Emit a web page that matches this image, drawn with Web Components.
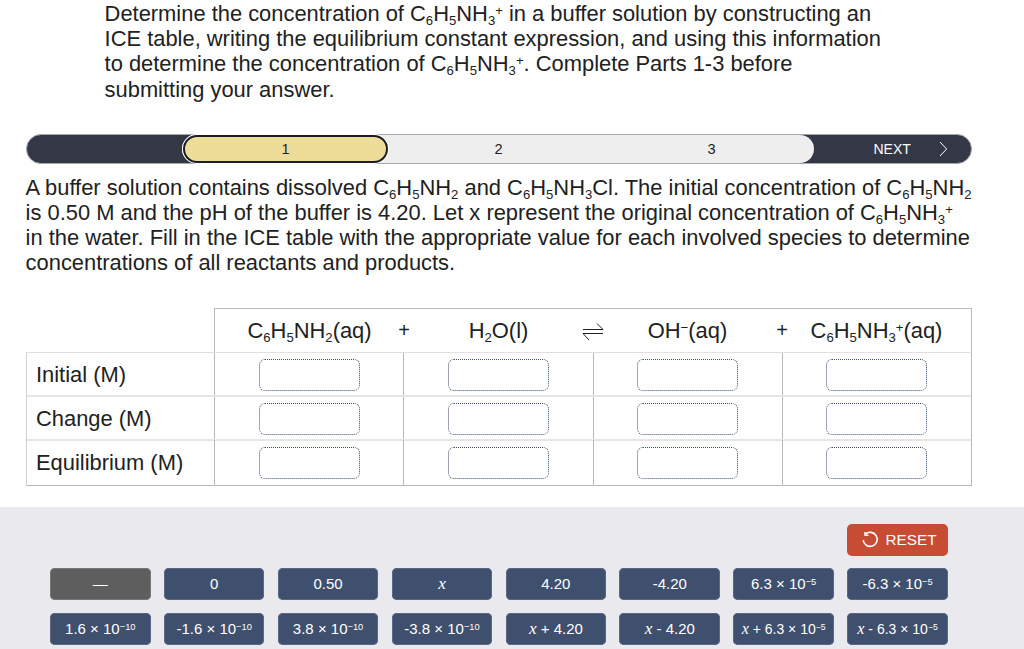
<!DOCTYPE html>
<html>
<head>
<meta charset="utf-8">
<style>
  html, body { margin: 0; padding: 0; }
  body { width: 1024px; height: 649px; overflow: hidden; background: #fff; color: #212121; font-family: "Liberation Sans", Arial, sans-serif; }
</style>
</head>
<body>
<quiz-page>
  <quiz-text slot="intro" style="padding: 1px 130px 0 104.6px; line-height: 25.2px;">Determine the concentration of C<sub>6</sub>H<sub>5</sub>NH<sub>3</sub><sup>+</sup> in a buffer solution by constructing an ICE table, writing the equilibrium constant expression, and using this information to determine the concentration of C<sub>6</sub>H<sub>5</sub>NH<sub>3</sub><sup>+</sup>. Complete Parts 1-3 before submitting your answer.</quiz-text>
  <step-bar slot="steps" current="1"></step-bar>
  <quiz-text slot="body" style="padding: 0 50px 0 25.6px;">A buffer solution contains dissolved C<sub>6</sub>H<sub>5</sub>NH<sub>2</sub> and C<sub>6</sub>H<sub>5</sub>NH<sub>3</sub>Cl. The initial concentration of C<sub>6</sub>H<sub>5</sub>NH<sub>2</sub> is 0.50 M and the pH of the buffer is 4.20. Let x represent the original concentration of C<sub>6</sub>H<sub>5</sub>NH<sub>3</sub><sup>+</sup> in the water. Fill in the ICE table with the appropriate value for each involved species to determine concentrations of all reactants and products.</quiz-text>
  <ice-table slot="table"></ice-table>
  <tile-tray slot="tray"></tile-tray>
</quiz-page>

<script>
/* global HTMLElement customElements */

const SCRIPTS = `
  sub, sup { font-size: 0.6em; line-height: 0; }
  sub { vertical-align: -0.28em; }
  sup { vertical-align: 0.42em; }
`;

class QuizPage extends HTMLElement {
  constructor() {
    super();
    const shadowRoot = this.attachShadow({ mode: 'open' });
    shadowRoot.innerHTML = `
      <style>
        :host { display: flex; flex-direction: column; width: 1024px; height: 649px; }
        .intro { height: 134px; }
        .steps { height: 30px; padding: 0 52px 0 26px; }
        .body { height: 144px; padding-top: 11px; box-sizing: border-box; }
        .table { height: 199px; padding: 0 52px 0 26px; box-sizing: border-box; }
        .tray { flex: 1; }
      </style>
      <div class="intro"><slot name="intro"></slot></div>
      <div class="steps"><slot name="steps"></slot></div>
      <div class="body"><slot name="body"></slot></div>
      <div class="table"><slot name="table"></slot></div>
      <div class="tray"><slot name="tray"></slot></div>
    `;
  }
}
customElements.define('quiz-page', QuizPage);

class QuizText extends HTMLElement {
  constructor() {
    super();
    const shadowRoot = this.attachShadow({ mode: 'open' });
    shadowRoot.innerHTML = `
      <style>
        :host { display: block; font-size: 21.9px; line-height: 25px; }
        ::slotted(sub), ::slotted(sup) { font-size: 0.6em; line-height: 0; }
        ::slotted(sub) { vertical-align: -0.28em; }
        ::slotted(sup) { vertical-align: 0.42em; }
      </style>
      <slot></slot>
    `;
  }
}
customElements.define('quiz-text', QuizText);

class StepBar extends HTMLElement {
  constructor() {
    super();
    const shadowRoot = this.attachShadow({ mode: 'open' });
    const current = this.getAttribute('current');
    const steps = ['1', '2', '3'].map(n =>
      `<div class="step ${n === current ? 'on' : ''}">${n}</div>`).join('');
    shadowRoot.innerHTML = `
      <style>
        :host { display: block; height: 30px; font-size: 14px; }
        .bar { display: flex; height: 30px; box-sizing: border-box; border-radius: 15px; background: #343746; border: 1px solid #a4a6b0; padding-left: 155px; align-items: stretch; }
        .track { display: grid; grid-template-columns: 206px 221px 205px; width: 632px; background: #eeeeee; border-radius: 14px; }
        .step { display: flex; align-items: center; justify-content: center; color: #212121; border-radius: 14px; font-size: 14.6px; padding-bottom: 1px; box-sizing: border-box; }
        .step.on { background: #eedd99; border: 2px solid #1c1c22; box-shadow: 0 0 0 1px #fff; margin-left: 1px; }
        .next { flex: 1; display: flex; align-items: center; color: #fff; padding-left: 59.5px; }
        .next svg { margin-left: 28px; }
      </style>
      <div class="bar">
        <div class="track">${steps}</div>
        <div class="next">NEXT
          <svg width="9" height="16" viewBox="0 0 9 16" fill="none" stroke="#fff" stroke-width="1"><path d="M1 1 L7.6 8 L1 15"/></svg>
        </div>
      </div>
    `;
  }
}
customElements.define('step-bar', StepBar);

class DropBox extends HTMLElement {
  constructor() {
    super();
    const shadowRoot = this.attachShadow({ mode: 'open' });
    shadowRoot.innerHTML = `
      <style>
        :host { display: block; width: 101px; height: 32px; box-sizing: border-box; border: 1px dotted #3f4f6e; border-radius: 6px; background: #fff; }
      </style>
    `;
  }
}
customElements.define('drop-box', DropBox);

class IceTable extends HTMLElement {
  constructor() {
    super();
    const shadowRoot = this.attachShadow({ mode: 'open' });
    const species = [
      'C<sub>6</sub>H<sub>5</sub>NH<sub>2</sub>(aq)',
      'H<sub>2</sub>O(l)',
      'OH<sup>&minus;</sup>(aq)',
      'C<sub>6</sub>H<sub>5</sub>NH<sub>3</sub><sup>+</sup>(aq)'
    ];
    const harpoons = `<svg width="22" height="20" viewBox="0 0 22 20" fill="none" stroke="#212121" stroke-width="1"><path d="M1 8.5 H21 L15 2.5"/><path d="M21 12.5 H1 L7 19"/></svg>`;
    const ops = ['+', harpoons, '+'];
    const head = species.map((s, i) => `<div class="sp"><span>${s}</span></div>${i < 3 ? `<div class="op">${ops[i]}</div>` : ''}`).join('');
    const rows = ['Initial (M)', 'Change (M)', 'Equilibrium (M)'].map(label => `
      <div class="row">
        <div class="label">${label}</div>
        ${species.map(() => '<div class="cell"><drop-box></drop-box></div>').join('')}
      </div>`).join('');
    shadowRoot.innerHTML = `
      <style>
        ${SCRIPTS}
        :host { display: block; width: 946px; font-size: 21.9px; }
        .head { display: flex; height: 44px; margin-left: 188px; box-sizing: border-box; border: 1px solid #b8b8b8; border-bottom: 0; }
        .sp { flex: 1; display: flex; align-items: center; justify-content: center; white-space: pre; }
        .op { width: 0; display: flex; align-items: center; justify-content: center; font-size: 20px; }
        .op svg { flex: none; }
        .body { border: 1px solid #b8b8b8; border-top-color: #e0e0e0; border-left-color: #d2d2d2; }
        .row { display: flex; height: 44px; padding-top: 1px; box-sizing: border-box; border-bottom: 2px solid #e6e6e6; }
        .row:last-child { border-bottom: 0; padding-top: 0; }
        .label { width: 187px; flex: none; display: flex; align-items: center; padding-left: 9px; box-sizing: border-box; }
        .cell { flex: 1; display: flex; align-items: center; justify-content: center; border-left: 1px solid #b8b8b8; margin-top: -1px; padding-top: 1px; }
      </style>
      <div class="head">${head}</div>
      <div class="body">${rows}</div>
    `;
  }
}
customElements.define('ice-table', IceTable);

class TileButton extends HTMLElement {
  constructor() {
    super();
    const shadowRoot = this.attachShadow({ mode: 'open' });
    shadowRoot.innerHTML = `
      <style>
        :host { display: flex; align-items: center; justify-content: center; height: 32px; box-sizing: border-box; border-radius: 5px; background: #3f4f6e; color: #fff; font-size: 15px; white-space: pre; box-shadow: inset 0 0 0 1px #5a6884; }
        :host([kind="dash"]) { background: #5e5e5e; box-shadow: inset 0 0 0 1px #777; }
        :host([kind="reset"]) { background: #c64c34; box-shadow: none; gap: 7px; font-size: 15.3px; padding-left: 2px; }
      </style>
      <slot></slot>
    `;
  }
}
customElements.define('tile-button', TileButton);

class TileTray extends HTMLElement {
  constructor() {
    super();
    const shadowRoot = this.attachShadow({ mode: 'open' });
    const sci = (a, e) => `${a} × 10<sup>−${e}</sup>`;
    const tiles = [
      '0', '0.50', '<i>x</i>', '4.20', '-4.20', sci('6.3', 5), sci('-6.3', 5),
      sci('1.6', 10), sci('-1.6', 10), sci('3.8', 10), sci('-3.8', 10),
      '<i>x</i> + 4.20', '<i>x</i> - 4.20', `<small><i>x</i> + ${sci('6.3', 5)}</small>`, `<small><i>x</i> - ${sci('6.3', 5)}</small>`
    ].map(t => `<tile-button><span>${t}</span></tile-button>`).join('');
    shadowRoot.innerHTML = `
      <style>
        :host { display: block; height: 142px; box-sizing: border-box; background: #e9e9ee; padding: 17px 0 0 50px; }
        .grid { display: grid; grid-template-columns: repeat(8, 100.6px); column-gap: 13.3px; row-gap: 13px; }
        .reset { grid-column: 8; margin-bottom: -1.5px; }
        sup { font-size: 0.62em; line-height: 0; vertical-align: 0.42em; }
        i { font-family: "Liberation Serif", serif; font-size: 1.15em; }
        small { font-size: 14px; }
        svg { display: block; }
      </style>
      <div class="grid">
        <tile-button class="reset" kind="reset"><svg width="18" height="18" viewBox="0 0 18 18" fill="none" stroke="#fff" stroke-width="1.6"><path d="M4.2 3.4 A7 7 0 1 1 2.2 9"/><path d="M4 1 V4.2 H7.4" stroke-width="1.4"/></svg><span>RESET</span></tile-button>
        <tile-button kind="dash"><span>—</span></tile-button>
        ${tiles}
      </div>
    `;
  }
}
customElements.define('tile-tray', TileTray);
</script>
</body>
</html>
